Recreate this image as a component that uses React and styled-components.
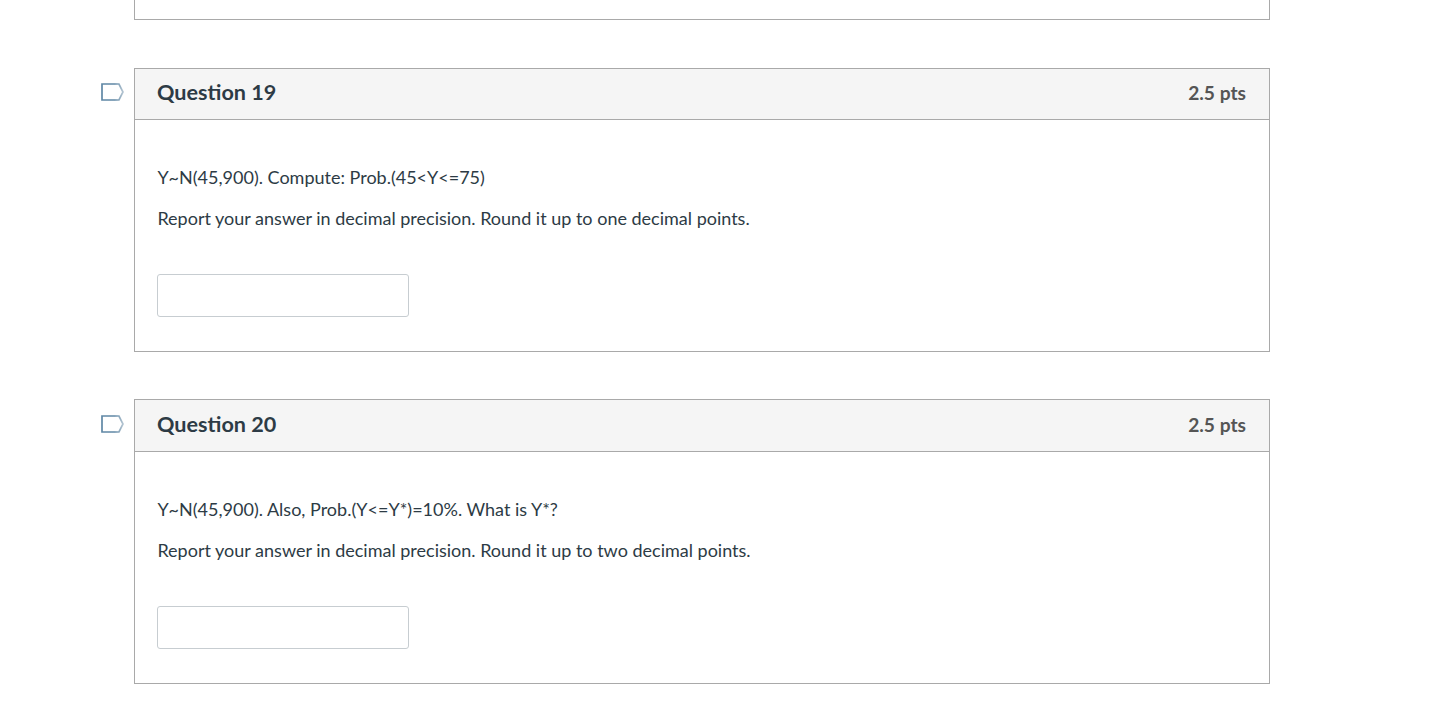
import React from 'react'
import styled, { createGlobalStyle } from 'styled-components'

const textColor = '#2D3B45'
const borderColor = '#A9A9A9'

const GlobalStyle = createGlobalStyle`
  html, body {
    margin: 0;
    padding: 0;
    background: #fff;
    overflow: hidden;
  }
  body {
    font-family: Lato, "Liberation Sans", sans-serif;
    color: ${textColor};
  }
`

const Page = styled.div`
  width: 1136px;
  height: 705px;
  margin-left: 134px;
  display: flex;
  flex-direction: column;
  gap: 47.3px;
`

const CardTail = styled.div`
  height: 19.3px;
  flex: none;
  box-sizing: content-box;
  border: 1px solid ${borderColor};
  border-top: none;
`

const Card = styled.section`
  position: relative;
  flex: none;
  box-sizing: border-box;
  height: 284.5px;
  border: 1px solid ${borderColor};
`

const Flag = styled.svg`
  position: absolute;
  left: -34px;
  top: 14.6px;
  width: 23px;
  height: 18px;
`

const Header = styled.header`
  box-sizing: border-box;
  height: 51.6px;
  padding: 0 23px 3px 22px;
  display: flex;
  justify-content: space-between;
  align-items: center;
  background: #f5f5f5;
  border-bottom: 1px solid ${borderColor};
`

const Title = styled.h2`
  margin: 0;
  font-size: 21.6px;
  font-weight: 700;
  line-height: 22px;
`

const Points = styled.span`
  font-size: 19.2px;
  font-weight: 700;
  color: #555;
`

const Body = styled.div`
  padding: 47px 22.4px 0;
`

const Text = styled.p`
  margin: 0 0 20px;
  font-size: 18px;
  line-height: 21px;
`

const Answer = styled.input`
  display: block;
  box-sizing: border-box;
  width: 252px;
  height: 43px;
  margin-top: 45px;
  margin-left: -0.4px;
  border: 1px solid #c7cdd1;
  border-radius: 3px;
  background: #fff;
`

const questions = [
  {
    title: 'Question 19',
    lines: [
      'Y~N(45,900). Compute: Prob.(45<Y<=75)',
      'Report your answer in decimal precision. Round it up to one decimal points.',
    ],
  },
  {
    title: 'Question 20',
    lines: [
      'Y~N(45,900). Also, Prob.(Y<=Y*)=10%. What is Y*?',
      'Report your answer in decimal precision. Round it up to two decimal points.',
    ],
  },
]

function App() {
  return (
    <Page>
      <GlobalStyle />
      <CardTail />
      {questions.map(q => (
        <Card key={q.title}>
          <Flag viewBox="0 0 23 18" fill="none">
            <defs>
              <linearGradient id={`flag-${q.title.slice(-2)}`} x1="0" x2="1" y1="0" y2="0">
                <stop offset="0.6" stopColor="#5f87a5" />
                <stop offset="1" stopColor="#b4c5d2" />
              </linearGradient>
            </defs>
            <path d="M1 1H18L22 9L18 17H1Z" stroke={`url(#flag-${q.title.slice(-2)})`} strokeWidth="1.7" />
          </Flag>
          <Header>
            <Title>{q.title}</Title>
            <Points>2.5 pts</Points>
          </Header>
          <Body>
            {q.lines.map(line => <Text key={line}>{line}</Text>)}
            <Answer type="text" />
          </Body>
        </Card>
      ))}
    </Page>
  )
}

export default App
